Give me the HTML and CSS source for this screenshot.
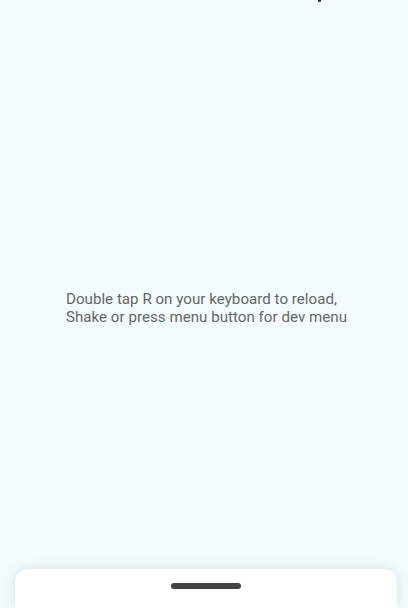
FILE: index.html
```html
<!DOCTYPE html>
<html>
<head>
<meta charset="utf-8">
<link rel="stylesheet" href="styles.css">
</head>
<body>
<div class="screen">
  <div class="status-mark"></div>
  <div class="main">
    <p class="hint">Double tap R on your keyboard to reload,<br>Shake or press menu button for dev menu</p>
  </div>
  <div class="sheet">
    <div class="handle"></div>
  </div>
</div>
</body>
</html>
```
FILE: styles.css
```css
html, body {
  margin: 0;
  padding: 0;
  width: 408px;
  height: 608px;
  overflow: hidden;
  background: #f3fbfe;
}
.screen {
  width: 408px;
  height: 608px;
  display: flex;
  flex-direction: column;
  position: relative;
}
.status-mark {
  position: absolute;
  left: 318px;
  top: 0;
  width: 3px;
  height: 2px;
  background: #333333;
  border-radius: 0 0 1px 1px;
}
.main {
  flex: 1;
  display: flex;
  align-items: center;
  justify-content: center;
  padding-top: 47px;
  padding-left: 5px;
}
.hint {
  margin: 0;
  font-family: Roboto, "Noto Sans", sans-serif;
  font-size: 15.1px;
  letter-spacing: 0.03px;
  line-height: 18px;
  color: #666666;
  text-align: left;
}
.sheet {
  margin: 0 11px 0 15px;
  height: 39px;
  background: #ffffff;
  border-radius: 13px 13px 0 0;
  box-shadow: 0 0 12px rgba(120, 140, 150, 0.25);
  display: flex;
  justify-content: center;
  padding-top: 14px;
  box-sizing: border-box;
}
.handle {
  width: 70px;
  height: 6px;
  border-radius: 3px;
  background: #444444;
}
```
